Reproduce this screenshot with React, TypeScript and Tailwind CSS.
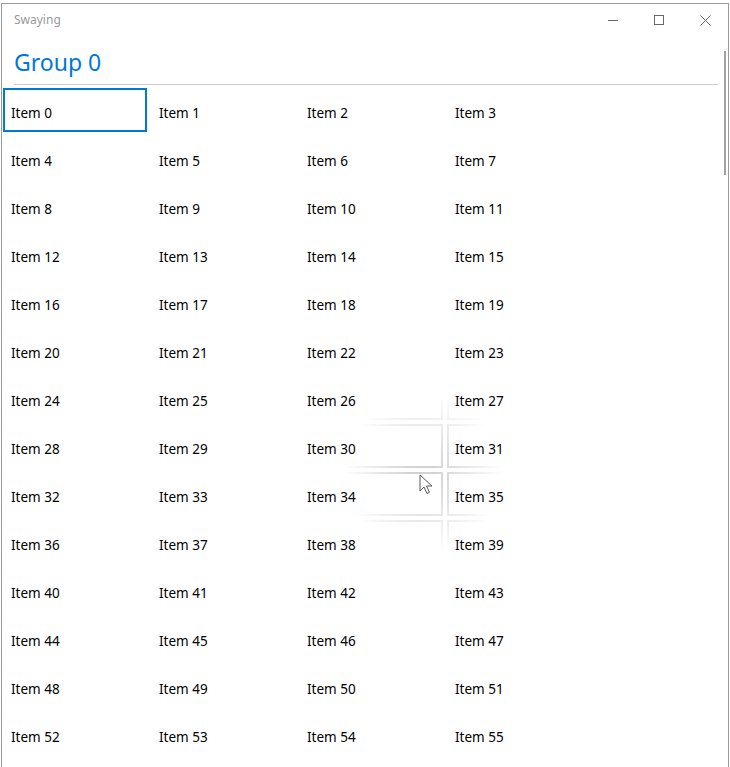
import { useMemo } from "react";

const FONT = "font-['Segoe_UI','Noto_Sans','Open_Sans',sans-serif]";

function CaptionButtons() {
  return (
    <div className="flex h-full items-stretch text-[#666]">
      <div className="flex w-[46px] items-center justify-center">
        <svg width="10" height="10" viewBox="0 0 10 10">
          <path d="M0 5.5h10" stroke="currentColor" strokeWidth="1" />
        </svg>
      </div>
      <div className="flex w-[46px] items-center justify-center">
        <svg width="10" height="10" viewBox="0 0 10 10">
          <rect x="0.5" y="0.5" width="9" height="9" fill="none" stroke="currentColor" strokeWidth="1" />
        </svg>
      </div>
      <div className="flex w-[46px] items-center justify-center">
        <svg width="11" height="11" viewBox="0 0 11 11">
          <path d="M0.5 0.5l10 10M10.5 0.5l-10 10" stroke="currentColor" strokeWidth="1" />
        </svg>
      </div>
    </div>
  );
}

function Cursor() {
  return (
    <svg
      className="pointer-events-none absolute left-[419px] top-[474px]"
      width="14"
      height="21"
      viewBox="0 0 14 21"
    >
      <path
        d="M1 1v16l4-4 3 6.5 2.5-1.2-3-6.3h5.5z"
        fill="#fff"
        stroke="#555"
        strokeWidth="1"
        strokeLinejoin="round"
      />
    </svg>
  );
}

export default function App() {
  const items = useMemo(() => Array.from({ length: 56 }, (_, i) => i), []);

  return (
    <div className={`relative h-[767px] w-[730px] overflow-hidden bg-white ${FONT}`}>
      {/* strip above the window */}
      <div className="h-[3px] bg-white" />

      <div className="ml-px flex h-[764px] w-[728px] flex-col overflow-hidden border-x border-t border-[#9a9a9a] bg-white">
        {/* Title bar */}
        <header className="flex h-8 shrink-0 items-center justify-between">
          <span className="pl-3 text-[12px] text-[#999]">Swaying</span>
          <div className="h-full">
            <CaptionButtons />
          </div>
        </header>

        {/* Group header */}
        <div className="shrink-0 pl-3 pr-[10px] pt-[10px]">
          <h1 className="h-8 text-[23px] font-normal leading-8 text-[#0078d7]">Group 0</h1>
          <div className="mt-[6px] h-px bg-[#cccccc]" />
        </div>

        {/* Items */}
        <div className="relative ml-px mt-[3px] w-fit">
          <div className="grid grid-cols-[repeat(4,144px)] gap-1">
            {items.map((i) => (
              <div
                key={i}
                className={`flex h-11 items-center pt-1.5 text-[13.5px] text-black ${
                  i === 0 ? "border-2 border-[#0078d7] pl-1.5" : "pl-2"
                }`}
              >
                Item {i}
              </div>
            ))}
          </div>

          {/* Reveal highlight around pointer */}
          <div className="pointer-events-none absolute inset-0 grid grid-cols-[repeat(4,144px)] gap-1 [mask-image:radial-gradient(circle_80px_at_420px_386px,black_15%,transparent_100%)]">
            {items.map((i) => (
              <div key={i} className="h-11 border-2 border-[#d2d2d2]" />
            ))}
          </div>
        </div>
      </div>

      {/* Scroll indicator */}
      <div className="pointer-events-none absolute left-[724px] top-[51px] h-[124px] w-[2px] bg-[#a3a3a3]" />

      <Cursor />
    </div>
  );
}
